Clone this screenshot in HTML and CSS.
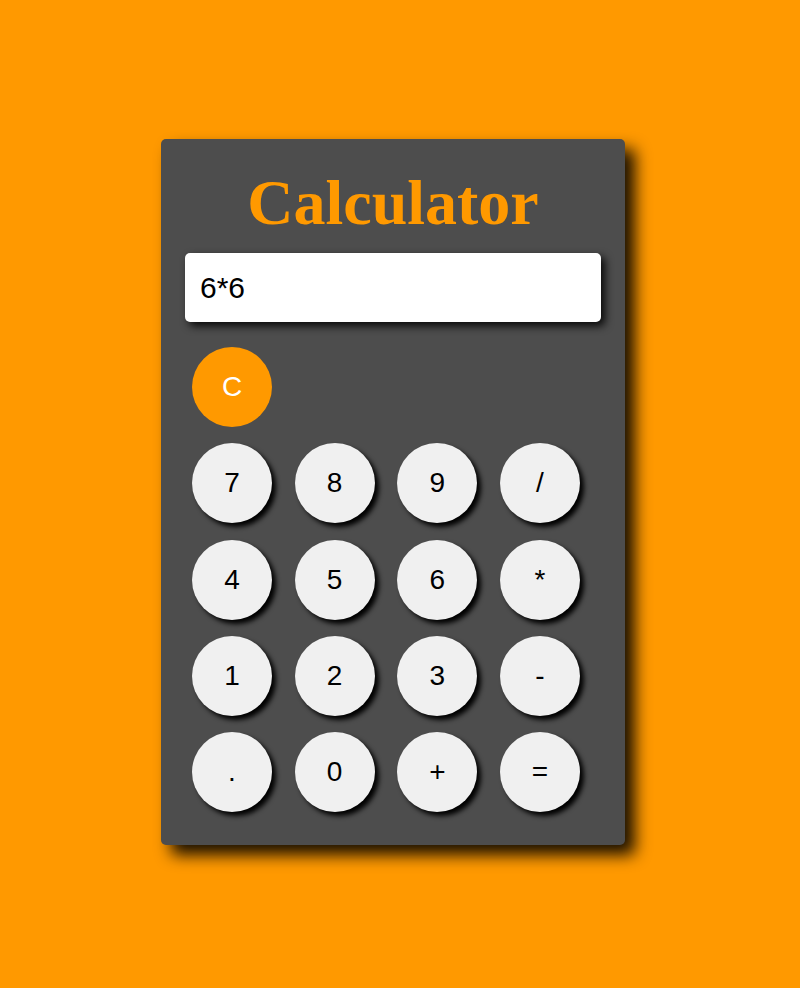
FILE: index.html
```html
<!DOCTYPE html>
<html>
<head>
<meta charset="utf-8">
<link rel="stylesheet" href="styles.css">
</head>
<body>
<div class="page">
  <div class="calc">
    <h1 class="title">Calculator</h1>
    <div class="display">6*6</div>
    <div class="keys">
      <button class="key clear">C</button>
      <div class="spacer"></div>
      <div class="spacer"></div>
      <div class="spacer"></div>
      <button class="key">7</button>
      <button class="key">8</button>
      <button class="key">9</button>
      <button class="key">/</button>
      <button class="key">4</button>
      <button class="key">5</button>
      <button class="key">6</button>
      <button class="key">*</button>
      <button class="key">1</button>
      <button class="key">2</button>
      <button class="key">3</button>
      <button class="key">-</button>
      <button class="key">.</button>
      <button class="key">0</button>
      <button class="key">+</button>
      <button class="key">=</button>
    </div>
  </div>
</div>
</body>
</html>
```
FILE: styles.css
```css
html, body {
  margin: 0;
  padding: 0;
  background: #ff9900;
  height: 100%;
}
.page {
  padding-top: 139px;
  padding-left: 161px;
}
.calc {
  width: 464px;
  box-sizing: border-box;
  background: #4d4d4d;
  border-radius: 5px;
  padding: 26px 24px 33px 24px;
  box-shadow: 10px 10px 16px rgba(0,0,0,0.9);
}
.title {
  margin: 0 0 12px 0;
  font-family: "Liberation Serif", "Times New Roman", serif;
  font-weight: bold;
  font-size: 64px;
  line-height: 76px;
  height: 76px;
  color: #ff9900;
  text-align: center;
}
.display {
  height: 69px;
  background: #fff;
  border-radius: 5px;
  box-shadow: 4px 4px 8px rgba(0,0,0,0.9);
  font-family: "Liberation Sans", Arial, sans-serif;
  font-size: 30px;
  line-height: 69px;
  padding-left: 15px;
  color: #000;
}
.keys {
  margin-top: 25px;
  margin-left: 7px;
  display: grid;
  grid-template-columns: repeat(4, 80px);
  column-gap: 22.67px;
  row-gap: 16.33px;
}
.key {
  width: 80px;
  height: 80px;
  border-radius: 50%;
  border: none;
  padding: 0;
  background: #f0f0f0;
  color: #000;
  font-family: "Liberation Sans", Arial, sans-serif;
  font-size: 28px;
  box-shadow: 4px 4px 5px #000;
}
.key.clear {
  background: #ff9900;
  color: #fff;
  box-shadow: none;
}
```
